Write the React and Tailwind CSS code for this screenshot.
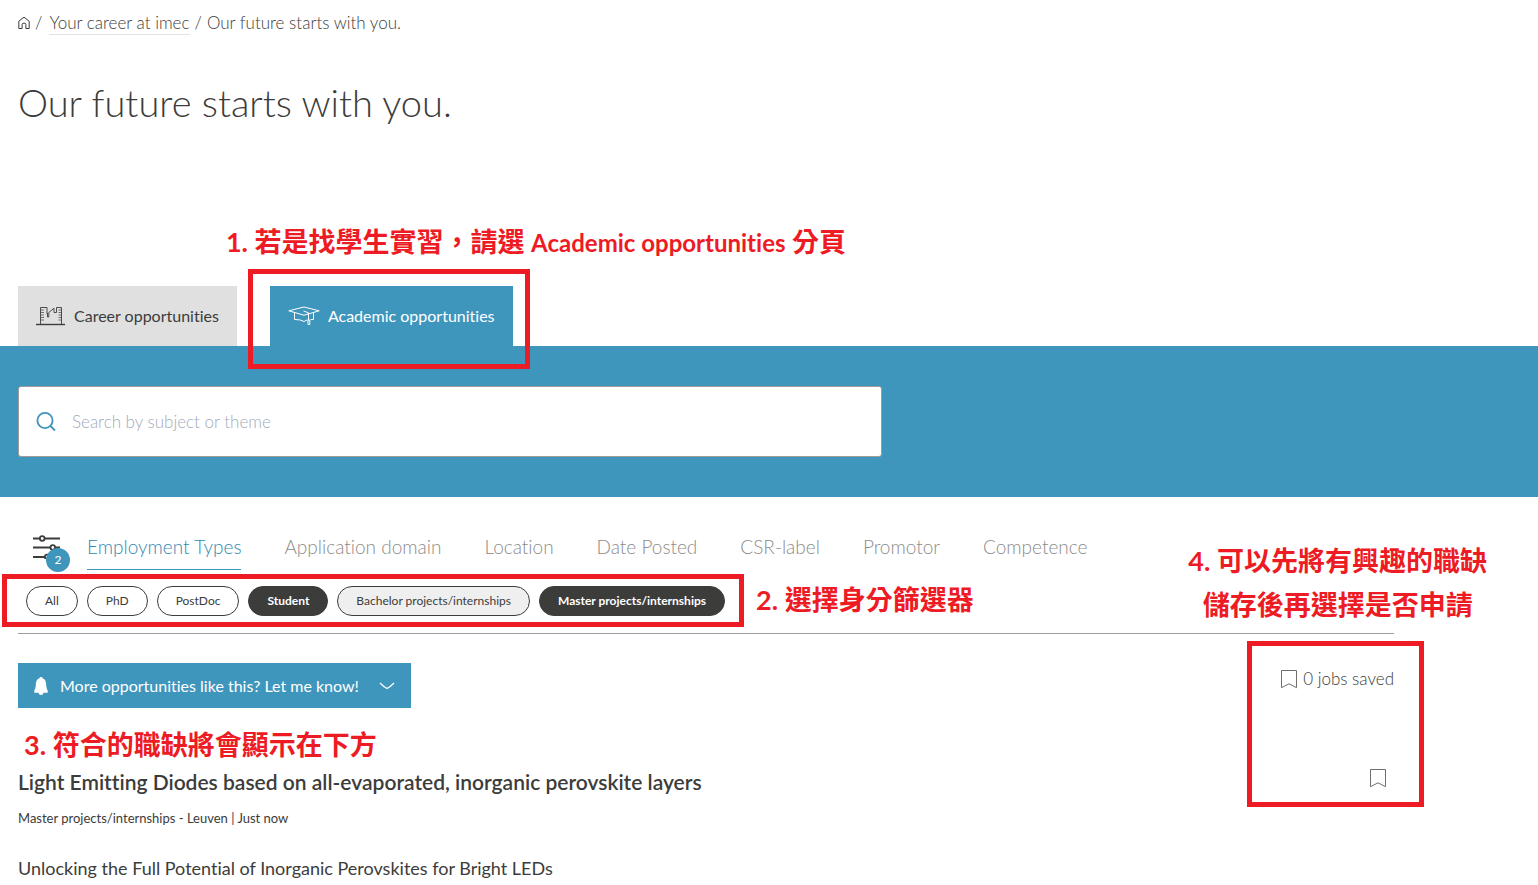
import React, { useState } from 'react';

const filterTabs = [
  'Employment Types',
  'Application domain',
  'Location',
  'Date Posted',
  'CSR-label',
  'Promotor',
  'Competence',
];

const employmentTypes = [
  { label: 'All', state: 'off' },
  { label: 'PhD', state: 'off' },
  { label: 'PostDoc', state: 'off' },
  { label: 'Student', state: 'on' },
  { label: 'Bachelor projects/internships', state: 'hover' },
  { label: 'Master projects/internships', state: 'on' },
];

const chipStyles = {
  off: 'bg-white',
  hover: 'bg-[#efefef]',
  on: 'bg-[#3c3c3b] text-white font-bold',
};

const HomeIcon = () => (
  <svg width="12" height="14" viewBox="0 0 12 14" fill="none" stroke="currentColor">
    <path d="M.8 5.2 6 1.2l5.2 4v7.3H7.9V8.6Q7.9 7.1 6 7.1T4.1 8.6v3.9H.8z" />
  </svg>
);

const BuildingsIcon = () => (
  <svg width="30" height="20" viewBox="0 0 30 20" fill="none" stroke="currentColor">
    <path d="M0 18.5h29" strokeWidth="1.4" />
    <path d="M4.500 18V1.500h6.500V8M25.500 18V1.500h-5V6.500h-2.500V2.200M18 2.200 12.800 6.500V11h-1.300V7" strokeWidth=".9" />
    <path d="M5 4h3M5 6.500h3M5 9h3M5 11.500h3M5 14h3M22.500 4h3M22.500 6.500h3M22.500 9h3M22.500 11.500h3M22.500 14h3" strokeWidth=".7" />
  </svg>
);

const CapIcon = () => (
  <svg width="32" height="20" viewBox="0 0 32 20" fill="none" stroke="currentColor">
    <path d="M.8 4.8 16 1l15.200 3.800L16 9.200z" />
    <path d="M6.500 6.800v6.700q6-.2 9.500 2 1.700-1.100 3.500-1.600M25.500 6.800v6.700h-3M15.500 5l5 1.800V14M20 14h1.800v4.500H20z" />
  </svg>
);

const SearchIcon = () => (
  <svg width="20" height="20" viewBox="0 0 20 20" fill="none" stroke="#3f96bd" strokeWidth="1.8">
    <circle cx="9" cy="8.5" r="7.6" />
    <path d="M14.5 14 19 18.500" />
  </svg>
);

const SlidersIcon = () => (
  <svg width="28" height="24" viewBox="0 0 28 24" fill="none" stroke="#3c3c3b" strokeWidth="1.8">
    <path d="M0 3.500h6.500M12 3.500h15M0 12.500h17M22.500 12.500H27M0 22h11.500M17 22h10" />
    <circle cx="9.2" cy="3.5" r="2.3" />
    <circle cx="19.8" cy="12.5" r="2.3" />
    <circle cx="14.2" cy="22" r="2.3" />
  </svg>
);

const BellIcon = () => (
  <svg width="14" height="18" viewBox="0 0 14 18" fill="currentColor">
    <path d="M7 0c1 0 1.500.6 1.600 1.300C11.500 2.200 12 5 12.200 8c.1 2.500.6 3.500 1.500 5.500v2.200H9.500C9.300 17 8.300 18 7 18s-2.300-1-2.500-2.300H.3v-2.200C1.200 11.500 1.700 10.500 1.800 8 2 5 2.500 2.200 5.400 1.300 5.500.6 6 0 7 0z" />
  </svg>
);

const ChevronIcon = ({ className }) => (
  <svg className={className} width="16" height="8" viewBox="0 0 16 8" fill="none" stroke="currentColor" strokeWidth="1.2">
    <path d="M1 1q3.500 3.700 7 5.500Q11.500 4.700 15 1" />
  </svg>
);

const BookmarkIcon = () => (
  <svg width="16" height="19" viewBox="0 0 16 19" fill="none" stroke="#6f6f6e">
    <path d="M.5.5h15v17.200L8 13.800.5 17.700z" />
  </svg>
);

// red outline drawn over the part of the page a step talks about
const Frame = ({ className }) => (
  <div className={`pointer-events-none absolute z-10 border-5 border-[#ed1c24] ${className}`} />
);

const Note = ({ className, children }) => (
  <p
    className={`pointer-events-none absolute z-10 whitespace-nowrap text-[27px] leading-[44px] font-bold text-[#ed1c24] font-[Lato,'Noto_Sans_CJK_TC',sans-serif] ${className}`}
  >
    {children}
  </p>
);

const Breadcrumb = () => (
  <nav aria-label="Breadcrumb" className="flex items-center gap-[5px] text-[17px] leading-6 font-light">
    <a href="#home" aria-label="Home">
      <HomeIcon />
    </a>
    <span>/</span>
    <a href="#career" className="ml-0.5 border-b border-[#e3e3e3] leading-[22px]">
      Your career at imec
    </a>
    <span>/</span>
    <span>Our future starts with you.</span>
  </nav>
);

const App = () => {
  const [query, setQuery] = useState('');
  const [activeFilter, setActiveFilter] = useState(filterTabs[0]);

  return (
    <div className="overflow-x-hidden bg-white font-[Lato,sans-serif] text-[#3c3c3b] [font-variant-ligatures:none]">
      <header className="px-[18px] pt-[11px]">
        <Breadcrumb />
        <h1 className="mt-[43px] text-[38px] leading-12 font-light">Our future starts with you.</h1>
        <div className="mt-40 flex gap-[33px]">
          <button className="flex h-[60px] items-center gap-2 bg-[#e0e0e0] px-[18px] text-base">
            <BuildingsIcon />
            Career opportunities
          </button>
          <div className="relative">
            <button className="flex h-[60px] items-center gap-2 bg-[#3f96bd] px-[18px] text-base text-white">
              <CapIcon />
              Academic opportunities
            </button>
            <Frame className="-top-[17px] -right-[17px] -bottom-[23px] -left-[22px]" />
            <Note className="bottom-full -left-11 mb-[22px]">
              1. 若是找學生實習，請選 <span className="text-2xl">Academic opportunities</span> 分頁
            </Note>
          </div>
        </div>
      </header>

      <section className="bg-[#3f96bd] px-[18px] py-10">
        <label className="flex h-[71px] max-w-[864px] items-center gap-4 rounded-[3px] border border-[#a09a98] bg-white px-[17px]">
          <SearchIcon />
          <input
            type="text"
            aria-label="Search by subject or theme"
            placeholder="Search by subject or theme"
            value={query}
            onChange={(e) => setQuery(e.target.value)}
            className="flex-1 text-[17px] font-light outline-none placeholder:text-[#a3aabc]"
          />
        </label>
      </section>

      <main className="max-w-[1412px] px-[18px]">
        <div className="relative border-b border-[#9d9d9c] pt-9 pb-[17px]">
          <div className="flex items-start pl-[15px]">
            <button aria-label="Filters, 2 active" className="relative mt-0.5 mr-[26px]">
              <SlidersIcon />
              <span className="absolute top-[13px] left-[13px] flex size-6 items-center justify-center rounded-full bg-[#3f96bd] text-xs text-white">
                2
              </span>
            </button>
            <div className="flex gap-[43px]">
              {filterTabs.map((tab) => (
                <button
                  key={tab}
                  onClick={() => setActiveFilter(tab)}
                  className={`h-[37px] border-b pb-2 text-[19px] leading-7 font-light ${
                    tab === activeFilter ? 'border-[#3f96bd] text-[#3489b0]' : 'border-transparent text-[#8c8c8b]'
                  }`}
                >
                  {tab}
                </button>
              ))}
            </div>
          </div>
          <div className="relative mt-4 ml-2 flex w-fit gap-[9px]">
            {employmentTypes.map((type) => (
              <button
                key={type.label}
                className={`h-[30px] rounded-full border border-[#3c3c3b] px-[18px] text-xs ${chipStyles[type.state]}`}
              >
                {type.label}
              </button>
            ))}
            <Frame className="-top-3 -right-[19px] -bottom-[11px] -left-6" />
            <Note className="-top-2 left-full ml-[31px]">2. 選擇身分篩選器</Note>
          </div>
          <Note className="right-0 bottom-1.5 -mr-[93px] text-center">
            4. 可以先將有興趣的職缺
            <br />
            儲存後再選擇是否申請
          </Note>
        </div>

        <div className="relative mt-[29px] flex items-start justify-between">
          <div>
            <button className="flex h-[45px] items-center gap-3 bg-[#3f96bd] px-4 text-base text-white">
              <BellIcon />
              More opportunities like this? Let me know!
              <ChevronIcon className="ml-2" />
            </button>
            <Note className="top-[60px] left-1.5">3. 符合的職缺將會顯示在下方</Note>
            <article className="mt-[60px]">
              <h2 className="text-[21px] leading-7 font-semibold">
                Light Emitting Diodes based on all-evaporated, inorganic perovskite layers
              </h2>
              <p className="mt-3 text-[13px] leading-5">Master projects/internships - Leuven | Just now</p>
              <p className="mt-7 text-lg leading-6">Unlocking the Full Potential of Inorganic Perovskites for Bright LEDs</p>
            </article>
          </div>
          <div className="flex flex-col items-end gap-[78px] pt-1">
            <a href="#saved" className="flex items-center gap-1.5 text-[17px] leading-6 font-light">
              <BookmarkIcon />
              0 jobs saved
            </a>
            <button aria-label="Save job" className="mr-2">
              <BookmarkIcon />
            </button>
          </div>
          <Frame className="-top-[22px] -right-[30px] h-[166px] w-[177px]" />
        </div>
      </main>
    </div>
  );
};

export default App;
